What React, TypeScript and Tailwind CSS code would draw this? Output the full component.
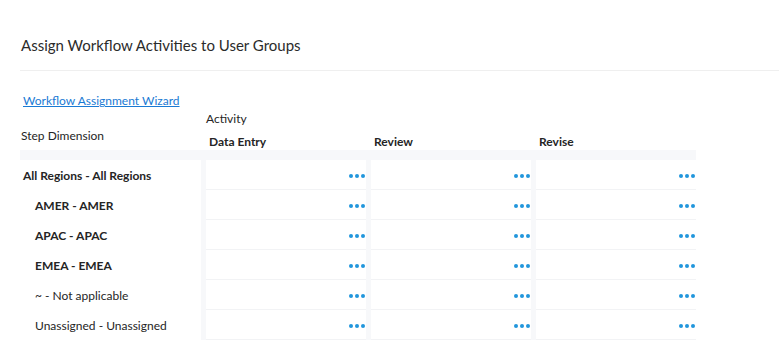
import React from 'react';

interface StepRow {
  label: string;
  bold: boolean;
  indent: boolean;
}

const rows: StepRow[] = [
  { label: 'All Regions - All Regions', bold: true, indent: false },
  { label: 'AMER - AMER', bold: true, indent: true },
  { label: 'APAC - APAC', bold: true, indent: true },
  { label: 'EMEA - EMEA', bold: true, indent: true },
  { label: '~ - Not applicable', bold: false, indent: true },
  { label: 'Unassigned - Unassigned', bold: false, indent: true },
];

const activities = ['Data Entry', 'Review', 'Revise'];

// Three blue dots used as the "more" trigger in each cell
const MoreDots: React.FC = () => (
  <button className="flex items-center gap-[2px] pr-px" aria-label="More">
    <span className="block w-[4px] h-[4px] rounded-full bg-[#2196dc]"></span>
    <span className="block w-[4px] h-[4px] rounded-full bg-[#2196dc]"></span>
    <span className="block w-[4px] h-[4px] rounded-full bg-[#2196dc]"></span>
  </button>
);

const App: React.FC = () => {
  return (
    <div
      className="w-[779px] h-[360px] bg-white text-[#252525] overflow-hidden"
      style={{ fontFamily: 'Lato, "Open Sans", sans-serif' }}
    >
      {/* Page header */}
      <div className="pl-[20px] pt-[35px]">
        <h1 className="text-[15px] leading-[20px] pl-px text-[#2b2b2b]">
          Assign Workflow Activities to User Groups
        </h1>
        <div className="mt-[15px] h-px bg-[#efefef]"></div>
      </div>

      {/* Assignment grid */}
      <div className="pl-[20px] pt-[22px] text-[12px] leading-[16px]">
        <div className="pl-[3px]">
          <a href="#" className="text-[#1a7ad4] underline">
            Workflow Assignment Wizard
          </a>
        </div>

        <div className="flex items-end w-[676px]">
          <div className="w-[181px] pl-px pb-[6px]">Step Dimension</div>
          <div className="flex-1 pl-[5px]">
            <div className="mt-[2px]">Activity</div>
            <div className="flex gap-[5px] mt-[7px]">
              {activities.map(a => (
                <div key={a} className="w-[160px] pl-[3px] font-bold">
                  {a}
                </div>
              ))}
            </div>
          </div>
        </div>

        <div className="h-[10px] w-[676px] bg-[#f7f8fa]"></div>

        <div className="flex w-[676px]">
          <div className="w-[181px]">
            {rows.map(r => (
              <div
                key={r.label}
                className={`h-[30px] flex items-center pt-px ${r.indent ? 'pl-[15px]' : 'pl-[3px]'} ${r.bold ? 'font-bold' : ''}`}
              >
                {r.label}
              </div>
            ))}
          </div>
          <div className="flex-1 flex gap-[5px] pl-[5px] bg-[#f7f8fa]">
            {activities.map(a => (
              <div key={a} className="w-[160px] bg-white">
                {rows.map(r => (
                  <div key={r.label} className="h-[30px] flex items-center justify-end pt-[3px] border-b border-[#f2f3f5]">
                    <MoreDots />
                  </div>
                ))}
              </div>
            ))}
          </div>
        </div>
      </div>
    </div>
  );
};

export default App;
